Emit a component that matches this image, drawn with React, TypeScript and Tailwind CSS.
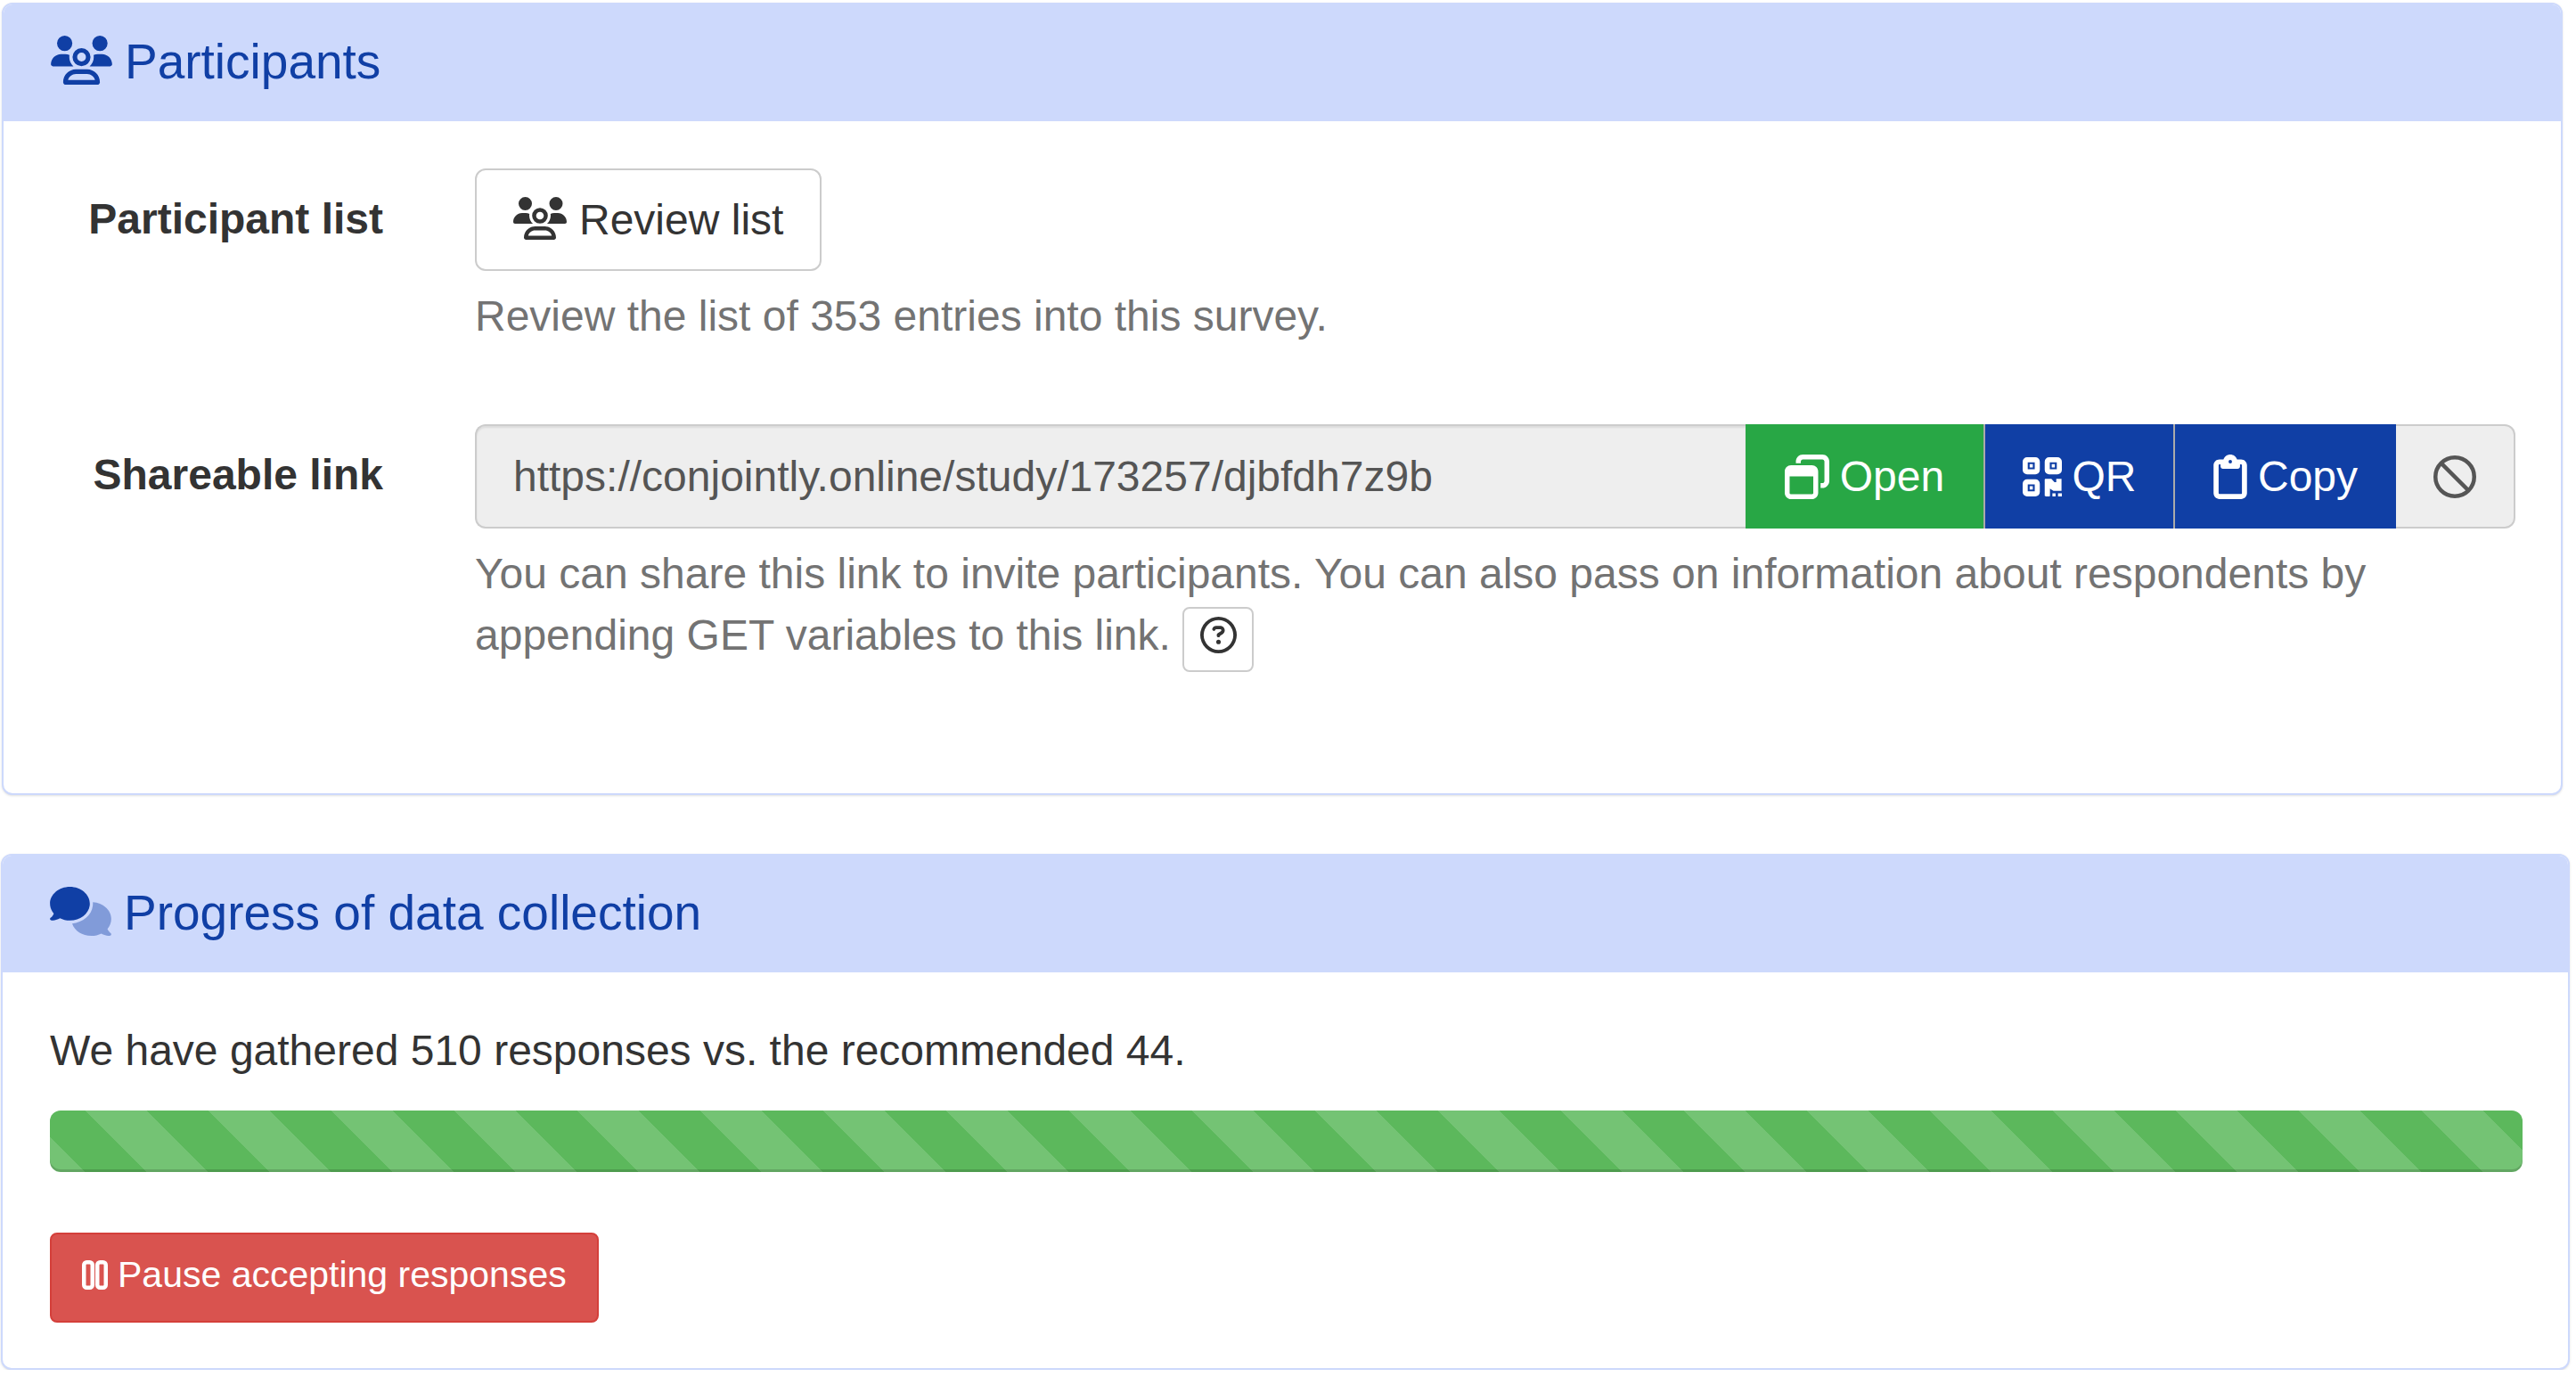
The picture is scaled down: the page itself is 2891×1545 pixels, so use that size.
import type { ReactNode } from "react";

function UsersIcon({ className }: { className?: string }) {
  return (
    <svg viewBox="0 0 640 512" fill="currentColor" aria-hidden="true" className={className}>
      <path d="M144 0a80 80 0 1 1 0 160A80 80 0 1 1 144 0zM512 0a80 80 0 1 1 0 160A80 80 0 1 1 512 0zM0 298.7C0 239.8 47.8 192 106.7 192h42.7c15.9 0 31 3.5 44.6 9.7c-1.3 7.2-1.9 14.7-1.9 22.3c0 38.2 16.8 72.5 43.3 96H21.3C9.6 320 0 310.4 0 298.7zM404.6 320c26.6-23.5 43.3-57.8 43.3-96c0-7.6-.7-15-1.9-22.3c13.6-6.3 28.7-9.7 44.6-9.7h42.7C592.2 192 640 239.8 640 298.7c0 11.8-9.6 21.3-21.3 21.3H404.6z" />
      <circle cx="320" cy="224" r="70" fill="none" stroke="currentColor" strokeWidth="48" />
      <path
        fillRule="evenodd"
        d="M128 485.3C128 411.7 187.7 352 261.3 352H378.7C452.3 352 512 411.7 512 485.3c0 14.7-11.9 26.7-26.7 26.7H154.7c-14.7 0-26.7-11.9-26.7-26.7zM261.3 400c-39.6 0-72.8 27-82.5 64H461.2c-9.8-37-42.9-64-82.5-64H261.3z"
      />
    </svg>
  );
}

function CommentsIcon({ className }: { className?: string }) {
  return (
    <svg viewBox="0 0 640 512" fill="currentColor" aria-hidden="true" className={className}>
      <path d="M208 352c114.9 0 208-78.8 208-176S322.9 0 208 0S0 78.8 0 176c0 38.6 14.7 74.3 39.6 103.4c-3.5 9.4-8.7 17.7-14.2 24.7c-4.8 6.2-9.7 11-13.3 14.3c-1.8 1.6-3.3 2.9-4.3 3.7c-.5 .4-.9 .7-1.1 .8l-.2 .2C1 327.2-1.4 334.4 .8 340.9S9.1 352 16 352c21.8 0 43.8-5.6 62.1-12.5c9.2-3.5 17.8-7.4 25.3-11.4C134.1 343.3 169.8 352 208 352z" />
      <path
        opacity="0.4"
        d="M448 176c0 112.3-99.1 196.9-216.5 207C255.8 457.4 336.4 512 432 512c38.2 0 73.9-8.7 104.7-23.9c7.5 4 16 7.9 25.2 11.4c18.3 6.9 40.3 12.5 62.1 12.5c6.9 0 13.1-4.5 15.2-11.1c2.1-6.6-.2-13.8-5.8-17.9l-.2-.2c-.2-.2-.6-.4-1.1-.8c-1-.8-2.500-2-4.300-3.700c-3.600-3.300-8.500-8.100-13.300-14.300c-5.500-7-10.700-15.400-14.200-24.700c24.900-29 39.600-64.700 39.600-103.400c0-92.800-84.900-168.900-192.600-175.500c.4 5.100 .6 10.300 .6 15.500z"
      />
    </svg>
  );
}

function WindowsIcon({ className }: { className?: string }) {
  return (
    <svg viewBox="0 0 512 512" fill="currentColor" aria-hidden="true" className={className}>
      <path d="M432 56H208c-13 0-24 11-24 24v20h-56V80c0-44.200 35.800-80 80-80h224c44.200 0 80 35.800 80 80v224c0 44.200-35.800 80-80 80h-20v-56h20c13 0 24-11 24-24V80c0-13-11-24-24-24z" />
      <path
        fillRule="evenodd"
        d="M72 124h240c40 0 72 32 72 72v244c0 40-32 72-72 72H72c-40 0-72-32-72-72V196c0-40 32-72 72-72zM56 252v192c0 6.600 5.400 12 12 12h248c6.600 0 12-5.400 12-12V252H56z"
      />
    </svg>
  );
}

function QrIcon({ className }: { className?: string }) {
  return (
    <svg viewBox="0 0 448 448" fill="currentColor" aria-hidden="true" className={className}>
      <g fill="none" stroke="currentColor" strokeWidth="58">
        <rect x="29" y="29" width="138" height="138" rx="22" />
        <rect x="281" y="29" width="138" height="138" rx="22" />
        <rect x="29" y="281" width="138" height="138" rx="22" />
      </g>
      <path d="M80 80h36v36H80zM332 80h36v36h-36zM80 332h36v36H80z" />
      <path d="M264 248h64l36 36h20v-36h60v136h-92l-40-24v84c0 4-4 4-8 4h-40c-8 0-12-4-12-12V260c0-8 4-12 12-12zM340 412h36v36h-36zM404 412h44v36h-44z" />
    </svg>
  );
}

function ClipboardIcon({ className }: { className?: string }) {
  return (
    <svg viewBox="0 0 384 512" fill="currentColor" aria-hidden="true" className={className}>
      <path
        fillRule="evenodd"
        d="M270 56h46c38 0 68 30 68 68v320c0 38-30 68-68 68H68c-38 0-68-30-68-68V124c0-38 30-68 68-68h46C126 22 156 0 192 0s66 22 78 56zM68 112c-6 0-10 4-10 10v322c0 6 4 10 10 10h248c6 0 10-4 10-10V122c0-6-4-10-10-10h-12v24c0 16-12 28-28 28H108c-16 0-28-12-28-28v-24H68zm124-10a20 20 0 1 0 0-40 20 20 0 1 0 0 40z"
      />
    </svg>
  );
}

function BanIcon({ className }: { className?: string }) {
  return (
    <svg viewBox="0 0 512 512" fill="none" stroke="currentColor" strokeWidth="48" aria-hidden="true" className={className}>
      <circle cx="256" cy="256" r="232" />
      <path d="M92 92l328 328" />
    </svg>
  );
}

function QuestionIcon({ className }: { className?: string }) {
  return (
    <svg viewBox="0 0 512 512" fill="currentColor" aria-hidden="true" className={className}>
      <path d="M464 256A208 208 0 1 0 48 256a208 208 0 1 0 416 0zM0 256a256 256 0 1 1 512 0A256 256 0 1 1 0 256zm169.800-90.700c7.900-22.300 29.100-37.300 52.800-37.300h58.300c34.900 0 63.100 28.300 63.100 63.100c0 22.600-12.100 43.500-31.700 54.800L280 264.400c-.2 13-10.900 23.600-24 23.600c-13.300 0-24-10.700-24-24V250.500c0-8.600 4.600-16.500 12.100-20.800l44.300-25.400c4.700-2.700 7.600-7.700 7.600-13.100c0-8.400-6.800-15.100-15.100-15.100H222.600c-3.400 0-6.400 2.100-7.500 5.300l-.4 1.200c-4.400 12.500-18.200 19-30.600 14.600s-19-18.200-14.600-30.600l.3-1.300zM224 352a32 32 0 1 1 64 0 32 32 0 1 1 -64 0z" />
    </svg>
  );
}

function PauseIcon({ className }: { className?: string }) {
  return (
    <svg viewBox="0 0 29 33" fill="none" stroke="currentColor" strokeWidth="4.500" aria-hidden="true" className={className}>
      <rect x="2.250" y="2.250" width="9.500" height="28.500" rx="3" />
      <rect x="17.250" y="2.250" width="9.500" height="28.500" rx="3" />
    </svg>
  );
}

function Panel({ icon, title, children }: { icon: ReactNode; title: string; children: ReactNode }) {
  return (
    <section className="overflow-hidden rounded-xl border-2 border-[#cdd9fc] bg-white shadow-sm">
      <header className="flex items-center gap-[14px] bg-[#cdd9fc] px-[53px] pt-[32px] pb-[35px] text-[#103fa5]">
        {icon}
        <h2 className="text-[55px] leading-[64px]">{title}</h2>
      </header>
      {children}
    </section>
  );
}

export default function App() {
  return (
    <main className="flex flex-col gap-[66px] bg-white pt-[3px] pr-[7px] pl-px font-['Liberation_Sans',Arial,sans-serif] text-[48px] leading-[69px] text-[#333]">
      <div className="pr-2 pl-px">
        <Panel icon={<UsersIcon className="mb-1 h-[55px] w-[69px]" />} title="Participants">
          <div className="grid grid-cols-[426px_1fr] gap-x-[103px] gap-y-[87px] pt-[53px] pr-[51px] pb-[136px]">
            <div className="pt-[22px] text-right font-bold">Participant list</div>
            <div>
              <button
                type="button"
                className="flex h-[115px] items-center gap-[14px] rounded-xl border-2 border-[#ccc] bg-white px-[41px]"
              >
                <UsersIcon className="mb-1 h-[48px] w-[60px]" />
                Review list
              </button>
              <p className="mt-4 text-[#737373]">Review the list of 353 entries into this survey.</p>
            </div>

            <label htmlFor="share-link" className="pt-[22px] text-right font-bold">
              Shareable link
            </label>
            <div>
              <div className="flex h-[117px]">
                <input
                  id="share-link"
                  readOnly
                  value="https://conjointly.online/study/173257/djbfdh7z9b"
                  className="min-w-0 flex-1 rounded-l-xl border-2 border-r-0 border-[#ccc] bg-[#eee] px-[41px] text-[#555] shadow-[inset_0_2px_2px_rgba(0,0,0,0.075)]"
                />
                <button type="button" className="flex w-[267px] items-center justify-center gap-3 bg-[#28a745] text-white">
                  <WindowsIcon className="size-[50px]" />
                  Open
                </button>
                <button
                  type="button"
                  className="flex w-[213px] items-center justify-center gap-3 border-l-2 border-[#aaa] bg-[#103fa5] text-white"
                >
                  <QrIcon className="size-[44px]" />
                  QR
                </button>
                <button
                  type="button"
                  className="flex w-[250px] items-center justify-center gap-3 border-l-2 border-[#aaa] bg-[#103fa5] text-white"
                >
                  <ClipboardIcon className="h-[50px] w-[38px]" />
                  Copy
                </button>
                <button
                  type="button"
                  aria-label="Disable link"
                  className="flex w-[134px] items-center justify-center rounded-r-xl border-2 border-l-0 border-[#ccc] bg-[#eee] text-[#555]"
                >
                  <BanIcon className="size-[48px]" />
                </button>
              </div>
              <p className="mt-4 text-[#737373]">
                You can share this link to invite participants. You can also pass on information about respondents by
                appending GET variables to this link.{" "}
                <button
                  type="button"
                  aria-label="Help"
                  className="mt-[3px] inline-flex h-[73px] w-[80px] items-start justify-center rounded-lg border-2 border-[#ccc] bg-white pt-[9px] align-top text-[#333]"
                >
                  <QuestionIcon className="size-[41px]" />
                </button>
              </p>
            </div>
          </div>
        </Panel>
      </div>

      <Panel icon={<CommentsIcon className="mb-1 h-[55px] w-[69px]" />} title="Progress of data collection">
        <div className="pt-[53px] pr-[51px] pb-[51px] pl-[53px]">
          <p>We have gathered 510 responses vs. the recommended 44.</p>
          <div
            role="progressbar"
            aria-label="Responses gathered"
            aria-valuenow={100}
            className="mt-[33px] h-[69px] rounded-xl bg-[#5cb85c] bg-[linear-gradient(45deg,rgba(255,255,255,0.15)_25%,transparent_25%,transparent_50%,rgba(255,255,255,0.15)_50%,rgba(255,255,255,0.15)_75%,transparent_75%)] bg-[length:138px_138px] bg-[position:40px_0] shadow-[inset_0_-3px_0_rgba(0,0,0,0.15)]"
          />
          <button
            type="button"
            className="mt-[68px] flex h-[101px] items-center gap-[11px] rounded-lg border-2 border-[#d43f3a] bg-[#d9534f] px-[34px] pb-[6px] text-[41px] text-white"
          >
            <PauseIcon className="h-[33px] w-[29px]" />
            Pause accepting responses
          </button>
        </div>
      </Panel>
    </main>
  );
}
